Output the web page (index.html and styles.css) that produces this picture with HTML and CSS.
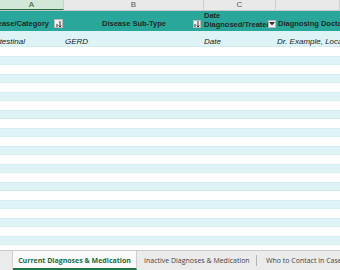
FILE: index.html
```html
<!DOCTYPE html>
<html lang="en">
<head>
  <meta charset="UTF-8" />
  <title>Medical History</title>
  <link rel="stylesheet" href="styles.css">
</head>
<body>
  <div class="sheet">
    <div class="col-heads">
      <div class="col-head a selected">A</div>
      <div class="col-head b">B</div>
      <div class="col-head c">C</div>
      <div class="col-head d"></div>
    </div>

    <div class="row header-row">
      <div class="cell a">
        <span class="clip-right">Disease/Category</span>
        <span class="filter sort"><svg width="6" height="6" viewBox="0 0 6 6"><path d="M1 6V3M4 0v6M2.6 4.5L4 6l1.4-1.5" stroke="#333" stroke-width="1" fill="none"/></svg></span>
      </div>
      <div class="cell b">
        <span class="centered">Disease Sub-Type</span>
        <span class="filter sort"><svg width="6" height="6" viewBox="0 0 6 6"><path d="M1 6V3M4 0v6M2.6 4.5L4 6l1.4-1.5" stroke="#333" stroke-width="1" fill="none"/></svg></span>
      </div>
      <div class="cell c">
        <span class="two-line">Date<br>Diagnosed/Treated</span>
        <span class="filter"><svg width="6" height="4" viewBox="0 0 6 4"><path d="M0 0h6L3 3.5z" fill="#333"/></svg></span>
      </div>
      <div class="cell d">Diagnosing Doctor</div>
    </div>

    <div class="row data-row">
      <div class="cell a"><span class="clip-right data">Gastrointestinal</span></div>
      <div class="cell b">GERD</div>
      <div class="cell c">Date</div>
      <div class="cell d">Dr. Example, Local Hospital</div>
    </div>

    <div class="rows">
      <div class="row plain"></div><div class="row band"></div>
      <div class="row plain"></div><div class="row band"></div>
      <div class="row plain"></div><div class="row band"></div>
      <div class="row plain"></div><div class="row band"></div>
      <div class="row plain"></div><div class="row band"></div>
      <div class="row plain"></div><div class="row band"></div>
      <div class="row plain"></div><div class="row band"></div>
      <div class="row plain"></div><div class="row band"></div>
      <div class="row plain"></div><div class="row band"></div>
      <div class="row plain"></div><div class="row band"></div>
      <div class="row plain"></div><div class="row band"></div>
      <div class="row plain"></div>
    </div>

    <div class="tabs">
      <div class="tab-nav"></div>
      <div class="tab active">Current Diagnoses &amp; Medication</div>
      <div class="tab inactive">Inactive Diagnoses &amp; Medication</div>
      <div class="tab-sep"></div>
      <div class="tab contact">Who to Contact in Case of Emergency</div>
    </div>
  </div>
</body>
</html>
```

FILE: styles.css
```css
* { box-sizing: border-box; }

body {
  margin: 0;
  font-family: 'Liberation Sans', Arial, sans-serif;
  background: #fff;
  overflow: hidden;
}

.sheet {
  width: 340px;
  height: 270px;
  display: flex;
  flex-direction: column;
  overflow: hidden;
}

/* column letters */
.col-heads {
  display: flex;
  height: 11px;
  flex: none;
  background: #e9e9e9;
  border-bottom: 1px solid #c8c8c8;
}

.col-head {
  font-size: 8px;
  line-height: 10px;
  color: #555;
  text-align: center;
  border-right: 1px solid #cfcfcf;
}

.col-head.selected {
  background: #d3e7d8;
  color: #1d5a33;
  border-bottom: 1px solid #217346;
}

.a { width: 64px; flex: none; }
.b { width: 140px; flex: none; }
.c { width: 72px; flex: none; }
.d { flex: 1; }

.row {
  display: flex;
  flex: none;
}

/* table header */
.header-row {
  height: 20px;
  background: #2aa79b;
  font-weight: bold;
  font-size: 7.5px;
  color: #1d2b2a;
}

.header-row .cell {
  display: flex;
  align-items: flex-end;
  padding-bottom: 3px;
  position: relative;
  overflow: hidden;
  white-space: nowrap;
}

.header-row .a {
  justify-content: flex-end;
  padding-right: 15px;
}

.header-row .b {
  justify-content: center;
}

.header-row .c {
  padding-left: 0;
  padding-right: 9px;
  padding-bottom: 2px;
  line-height: 9px;
}

.header-row .d {
  padding-left: 2px;
}

.filter {
  position: absolute;
  right: 1px;
  bottom: 3px;
  width: 9px;
  height: 9px;
  background: #f3f3f3;
  border: 1px solid #b9b9b9;
  display: flex;
  align-items: center;
  justify-content: center;
}

.header-row .b .filter { right: 3px; width: 8px; height: 8px; }
.header-row .c .filter { right: 0; width: 8px; height: 8px; }

/* first data row */
.data-row {
  height: 16px;
  background: #ddf3f5;
  font-size: 8px;
  font-style: italic;
  color: #222;
  border-bottom: 1px solid #d2ecee;
}

.data-row .cell {
  display: flex;
  align-items: flex-end;
  line-height: 9px;
  padding-bottom: 0;
  overflow: hidden;
  white-space: nowrap;
}

.data-row .a {
  justify-content: flex-end;
  padding-right: 39px;
}

.data-row .b { padding-left: 1px; }
.data-row .d { padding-left: 1px; }

/* banded rows */
.rows {
  flex: 1;
  display: flex;
  flex-direction: column;
  overflow: hidden;
}

.plain {
  height: 9px;
  background: #fff;
}

.band {
  height: 9px;
  background: #def3f5;
  border-top: 1px solid #d5eef0;
  border-bottom: 1px solid #d5eef0;
}

/* sheet tabs */
.tabs {
  height: 20px;
  flex: none;
  display: flex;
  align-items: stretch;
  background: #ebebeb;
  border-top: 1px solid #c9c9c9;
  font-family: 'Open Sans', 'Noto Sans', sans-serif;
  font-size: 7px;
  color: #444;
  white-space: nowrap;
}

.tab-nav {
  width: 13px;
  flex: none;
  border-right: 1px solid #cfcfcf;
}

.tab {
  display: flex;
  align-items: center;
  flex: none;
  overflow: hidden;
}

.tab.active {
  width: 124px;
  justify-content: center;
  background: #fafafa;
  color: #1e6b3c;
  font-weight: bold;
  border-bottom: 2px solid #217346;
  border-right: 1px solid #cfcfcf;
  padding-top: 1px;
}

.tab.inactive {
  width: 119px;
  padding-left: 7px;
}

.tab.contact {
  flex: 1;
  padding-left: 9px;
}

.tab-sep {
  width: 1px;
  flex: none;
  margin: 4px 0;
  background: #b5b5b5;
}
```
